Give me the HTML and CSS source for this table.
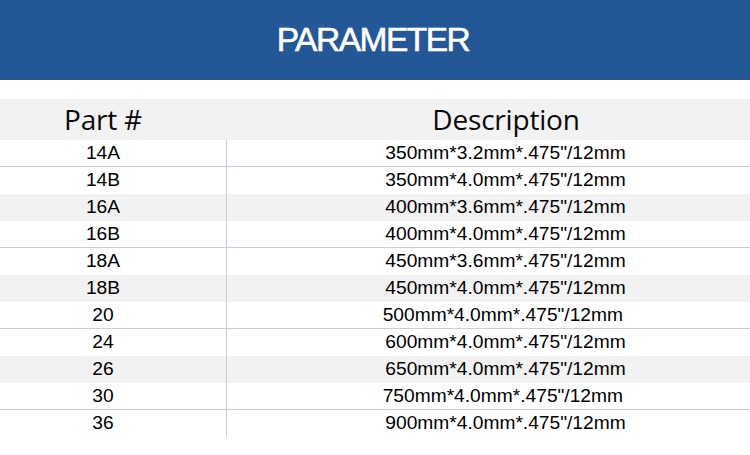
FILE: index.html
```html
<!DOCTYPE html>
<html lang="en">
<head>
<meta charset="utf-8">
<title>Parameter</title>
<link rel="stylesheet" href="styles.css">
</head>
<body>
<header class="banner"><h1 class="banner-title">PARAMETER</h1></header>
<main class="spec">
  <div class="spec-head">
    <div class="hcell hcell-part">Part #</div>
    <div class="hcell hcell-desc">Description</div>
  </div>
  <div class="row line"><div class="cell part">14A</div><div class="cell desc">350mm*3.2mm*.475"/12mm</div></div>
  <div class="row"><div class="cell part">14B</div><div class="cell desc">350mm*4.0mm*.475"/12mm</div></div>
  <div class="row shade"><div class="cell part">16A</div><div class="cell desc">400mm*3.6mm*.475"/12mm</div></div>
  <div class="row line"><div class="cell part">16B</div><div class="cell desc">400mm*4.0mm*.475"/12mm</div></div>
  <div class="row"><div class="cell part">18A</div><div class="cell desc">450mm*3.6mm*.475"/12mm</div></div>
  <div class="row shade"><div class="cell part">18B</div><div class="cell desc">450mm*4.0mm*.475"/12mm</div></div>
  <div class="row line"><div class="cell part">20</div><div class="cell desc">500mm*4.0mm*.475"/12mm&nbsp;</div></div>
  <div class="row"><div class="cell part">24</div><div class="cell desc">600mm*4.0mm*.475"/12mm</div></div>
  <div class="row shade"><div class="cell part">26</div><div class="cell desc">650mm*4.0mm*.475"/12mm</div></div>
  <div class="row line"><div class="cell part">30</div><div class="cell desc">750mm*4.0mm*.475"/12mm&nbsp;</div></div>
  <div class="row"><div class="cell part">36</div><div class="cell desc">900mm*4.0mm*.475"/12mm</div></div>
</main>
</body>
</html>
```
FILE: styles.css
```css
html, body {
  margin: 0;
  padding: 0;
  background: #ffffff;
}
body {
  width: 750px;
  height: 455px;
  overflow: hidden;
  font-family: "Liberation Sans", Arial, sans-serif;
  color: #000000;
}
.banner {
  height: 80px;
  background: #235797;
  display: flex;
  align-items: center;
  justify-content: center;
}
.banner-title {
  margin: 0 4px 0 0;
  font-family: "Liberation Sans", Arial, sans-serif;
  font-weight: 400;
  font-size: 33.5px;
  letter-spacing: -1.5px;
  color: #ffffff;
  -webkit-text-stroke: 0.6px #ffffff;
}
.spec {
  margin-top: 19px;
}
.spec-head {
  height: 41px;
  background: #f2f2f2;
  display: grid;
  grid-template-columns: 226px 1fr;
  align-items: center;
}
.hcell {
  font-family: "Open Sans", "Noto Sans", sans-serif;
  font-size: 28px;
  line-height: 41px;
  text-align: center;
  color: #0a0a0a;
  letter-spacing: -0.2px;
}
.hcell-part { padding-right: 20px; }
.hcell-desc { padding-left: 36px; }
.row {
  height: 27px;
  box-sizing: border-box;
  display: grid;
  grid-template-columns: 226px 1fr;
}
.row.shade { background: #f2f2f2; }
.row.line { border-bottom: 1px solid #c8cfdf; }
.cell {
  font-size: 19.2px;
  line-height: 26px;
  text-align: center;
}
.part { padding-right: 20px; }
.desc {
  border-left: 1px solid #c8cfdf;
  padding-left: 34px;
}
```
